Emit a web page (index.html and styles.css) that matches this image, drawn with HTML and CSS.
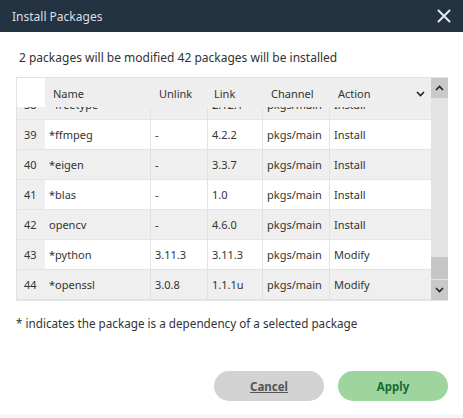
FILE: index.html
```html
<!DOCTYPE html>
<html lang="en">
<head>
    <meta charset="UTF-8">
    <meta name="viewport" content="width=device-width, initial-scale=1.0">
    <title>Install Packages</title>
    <link rel="stylesheet" href="styles.css">
</head>
<body>
    <div class="dialog">
        <div class="title-bar">
            <span class="title">Install Packages</span>
            <svg class="close" width="14" height="14" viewBox="0 0 14 14">
                <path d="M1 1 L13 13 M13 1 L1 13" stroke="#e6ebef" stroke-width="2" fill="none"/>
            </svg>
        </div>

        <div class="content">
            <p class="summary">2 packages will be modified 42 packages will be installed</p>

            <div class="table-box">
                <div class="table">
                    <div class="row head">
                        <div class="cell num corner"></div>
                        <div class="cell">Name</div>
                        <div class="cell">Unlink</div>
                        <div class="cell link-head">Link</div>
                        <div class="cell">Channel</div>
                        <div class="cell action-head">Action
                            <svg width="9" height="6" viewBox="0 0 9 6"><path d="M1 1 L4.5 4.5 L8 1" stroke="#222" stroke-width="1.6" fill="none"/></svg>
                        </div>
                    </div>
                    <div class="body">
                        <div class="row even cut">
                            <div class="cell num">38</div>
                            <div class="cell">*freetype</div>
                            <div class="cell">-</div>
                            <div class="cell">2.12.1</div>
                            <div class="cell">pkgs/main</div>
                            <div class="cell">Install</div>
                        </div>
                        <div class="row">
                            <div class="cell num">39</div>
                            <div class="cell">*ffmpeg</div>
                            <div class="cell">-</div>
                            <div class="cell">4.2.2</div>
                            <div class="cell">pkgs/main</div>
                            <div class="cell">Install</div>
                        </div>
                        <div class="row even">
                            <div class="cell num">40</div>
                            <div class="cell">*eigen</div>
                            <div class="cell">-</div>
                            <div class="cell">3.3.7</div>
                            <div class="cell">pkgs/main</div>
                            <div class="cell">Install</div>
                        </div>
                        <div class="row">
                            <div class="cell num">41</div>
                            <div class="cell">*blas</div>
                            <div class="cell">-</div>
                            <div class="cell">1.0</div>
                            <div class="cell">pkgs/main</div>
                            <div class="cell">Install</div>
                        </div>
                        <div class="row even">
                            <div class="cell num">42</div>
                            <div class="cell">opencv</div>
                            <div class="cell">-</div>
                            <div class="cell">4.6.0</div>
                            <div class="cell">pkgs/main</div>
                            <div class="cell">Install</div>
                        </div>
                        <div class="row">
                            <div class="cell num">43</div>
                            <div class="cell">*python</div>
                            <div class="cell">3.11.3</div>
                            <div class="cell">3.11.3</div>
                            <div class="cell">pkgs/main</div>
                            <div class="cell">Modify</div>
                        </div>
                        <div class="row even">
                            <div class="cell num">44</div>
                            <div class="cell">*openssl</div>
                            <div class="cell">3.0.8</div>
                            <div class="cell">1.1.1u</div>
                            <div class="cell">pkgs/main</div>
                            <div class="cell">Modify</div>
                        </div>
                    </div>
                </div>
                <div class="scrollbar">
                    <div class="sb-btn">
                        <svg width="9" height="6" viewBox="0 0 9 6"><path d="M1 5 L4.5 1.5 L8 5" stroke="#222" stroke-width="1.6" fill="none"/></svg>
                    </div>
                    <div class="sb-track">
                        <div class="sb-thumb"></div>
                    </div>
                    <div class="sb-btn">
                        <svg width="9" height="6" viewBox="0 0 9 6"><path d="M1 1 L4.5 4.5 L8 1" stroke="#222" stroke-width="1.6" fill="none"/></svg>
                    </div>
                </div>
            </div>

            <p class="note">* indicates the package is a dependency of a selected package</p>

            <div class="buttons">
                <button class="btn cancel">Cancel</button>
                <button class="btn apply">Apply</button>
            </div>
        </div>
        <div class="bottom-strip"></div>
    </div>
</body>
</html>
```

FILE: styles.css
```css
body {
    margin: 0;
    padding: 0;
    background-color: #fff;
    font-family: "Noto Sans", "DejaVu Sans", sans-serif;
    color: #333;
}
.dialog {
    width: 463px;
    height: 418px;
    display: flex;
    flex-direction: column;
    background-color: #fff;
}
.title-bar {
    height: 32px;
    background-color: #243342;
    display: flex;
    align-items: center;
    justify-content: space-between;
    padding: 0 12px 0 12px;
    flex-shrink: 0;
}
.title {
    color: #d9dfe4;
    font-size: 12px;
}
.close {
    margin-top: -1px;
}
.content {
    flex: 1;
    padding: 0 15px 0 16px;
}
.summary {
    margin: 19px 0 0 3px;
    font-size: 12px;
    line-height: 14px;
    color: #333;
}
.table-box {
    margin-top: 12px;
    height: 222px;
    display: flex;
    border: 1px solid #e2e2e2;
    border-right: none;
    overflow: hidden;
}
.table {
    width: 414px;
    display: flex;
    flex-direction: column;
    font-size: 11px;
}
.row {
    display: grid;
    grid-template-columns: 28px 106px 57px 55px 67px 101px;
    height: 30px;
    background-color: #fff;
    border-bottom: 1px solid #e4e4e4;
    box-sizing: border-box;
}
.row.even {
    background-color: #efefef;
}
.row .cell {
    display: flex;
    align-items: center;
    padding-left: 4px;
    border-right: 1px solid #e2e2e2;
    white-space: nowrap;
    overflow: hidden;
}
.row .cell:last-child {
    border-right: none;
}
.row .num {
    background-color: #efefef;
    border-right: none;
    padding-left: 7px;
}
.row.head {
    height: 29px;
    background-color: #eeeeee;
    border-bottom: none;
    position: relative;
    z-index: 1;
}
.row.head .cell {
    border-right: none;
    padding-left: 8px;
    align-items: flex-end;
    padding-bottom: 6px;
}
.row.head .link-head {
    padding-left: 6px;
}
.row.head .corner {
    background-color: #fff;
}
.row.head .action-head {
    justify-content: space-between;
    padding-right: 6px;
}
.action-head svg {
    margin-bottom: 4px;
}
.body {
    flex: 1;
    overflow: hidden;
}
.row.cut {
    margin-top: -17px;
}
.scrollbar {
    width: 17px;
    display: flex;
    flex-direction: column;
    background-color: #e3e3e3;
}
.sb-btn {
    height: 20px;
    background-color: #c9c9c9;
    display: flex;
    align-items: center;
    justify-content: center;
}
.sb-track {
    flex: 1;
    display: flex;
    flex-direction: column;
    justify-content: flex-end;
}
.sb-thumb {
    height: 22px;
    margin-bottom: 1px;
    background-color: #c6c6c6;
}
.note {
    margin: 14px 0 0 0;
    font-size: 11.7px;
    color: #333;
}
.buttons {
    display: flex;
    justify-content: flex-end;
    gap: 14px;
    margin-top: 40px;
}
.btn {
    width: 110px;
    height: 30px;
    border: none;
    border-radius: 15px;
    font-family: "Noto Sans", "DejaVu Sans", sans-serif;
    font-size: 11.5px;
    font-weight: bold;
    cursor: pointer;
}
.cancel {
    background-color: #d3d3d3;
    color: #555;
    text-decoration: underline;
}
.apply {
    background-color: #9ed59f;
    color: #1c6a33;
}
.bottom-strip {
    height: 4px;
    background-color: #f1fafa;
    flex-shrink: 0;
}
```
